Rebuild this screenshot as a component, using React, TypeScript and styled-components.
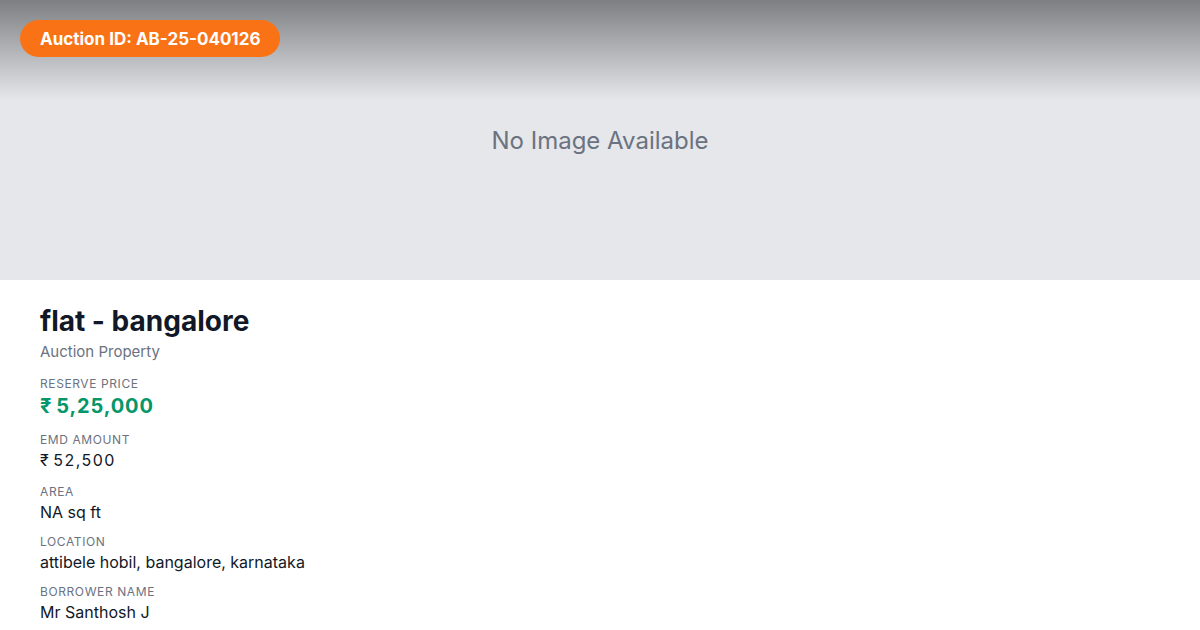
import React from "react";
import styled, { createGlobalStyle } from "styled-components";

const Global = createGlobalStyle`
  html, body { margin: 0; padding: 0; background: #ffffff; }
  body { font-family: Inter, "Noto Sans", sans-serif; width: 1200px; height: 630px; overflow: hidden; }
  * { box-sizing: border-box; }
`;

const Card = styled.div`
  width: 1200px;
  height: 630px;
  display: flex;
  flex-direction: column;
  background: #ffffff;
`;

const ImageArea = styled.div`
  position: relative;
  height: 280px;
  flex: none;
  background: #e5e7eb;
  display: flex;
  align-items: center;
  justify-content: center;
`;

const TopShade = styled.div`
  position: absolute;
  left: 0;
  right: 0;
  top: 0;
  height: 100px;
  background: linear-gradient(to bottom, rgba(0, 0, 0, 0.45), rgba(0, 0, 0, 0));
`;

const Badge = styled.div`
  position: absolute;
  top: 20px;
  left: 20px;
  height: 37px;
  padding: 0 20px;
  display: flex;
  align-items: center;
  border-radius: 999px;
  background: #f97316;
  color: #ffffff;
  font-size: 17px;
  font-weight: 700;
`;

const Placeholder = styled.div`
  font-size: 24px;
  color: #6b7280;
`;

const Body = styled.div`
  padding: 25px 40px 0;
  display: flex;
  flex-direction: column;
`;

const Title = styled.h1`
  margin: 0;
  font-size: 28px;
  line-height: 32px;
  font-weight: 700;
  color: #111827;
`;

const Subtitle = styled.div`
  margin-top: 5px;
  font-size: 15px;
  line-height: 20px;
  color: #6b7280;
`;

const Fields = styled.div`
  margin-top: 14px;
  display: flex;
  flex-direction: column;
  gap: 10px;
`;

const Field = styled.div`
  display: flex;
  flex-direction: column;
`;

const Label = styled.div`
  font-size: 12px;
  line-height: 16px;
  letter-spacing: 0.05em;
  text-transform: uppercase;
  color: #6b7280;
`;

const Value = styled.div<{ $accent?: boolean; $money?: boolean }>`
  font-size: ${(p) => (p.$accent ? "20px" : "16px")};
  line-height: ${(p) => (p.$accent ? "28px" : "24px")};
  font-weight: ${(p) => (p.$accent ? 700 : 400)};
  color: ${(p) => (p.$accent ? "#059669" : "#111827")};
  padding-bottom: ${(p) => (p.$money ? "2px" : "0")};
`;

const Digits = styled.span<{ $spacing: number }>`
  letter-spacing: ${(p) => p.$spacing}px;
`;

type F = { label: string; value: string; accent?: boolean; money?: boolean };

const fields: F[] = [
  { label: "Reserve Price", value: "5,25,000", accent: true, money: true },
  { label: "EMD Amount", value: "52,500", money: true },
  { label: "Area", value: "NA sq ft" },
  { label: "Location", value: "attibele hobil, bangalore, karnataka" },
  { label: "Borrower Name", value: "Mr Santhosh J" },
];

export default function App() {
  return (
    <>
      <Global />
      <Card>
        <ImageArea>
          <TopShade />
          <Badge>Auction ID: AB-25-040126</Badge>
          <Placeholder>No Image Available</Placeholder>
        </ImageArea>
        <Body>
          <Title>flat - bangalore</Title>
          <Subtitle>Auction Property</Subtitle>
          <Fields>
            {fields.map((f) => (
              <Field key={f.label}>
                <Label>{f.label}</Label>
                <Value $accent={f.accent} $money={f.money}>
                  {f.money ? (
                    <>
                      ₹ <Digits $spacing={f.accent ? 0.9 : 1.5}>{f.value}</Digits>
                    </>
                  ) : (
                    f.value
                  )}
                </Value>
              </Field>
            ))}
          </Fields>
        </Body>
      </Card>
    </>
  );
}
